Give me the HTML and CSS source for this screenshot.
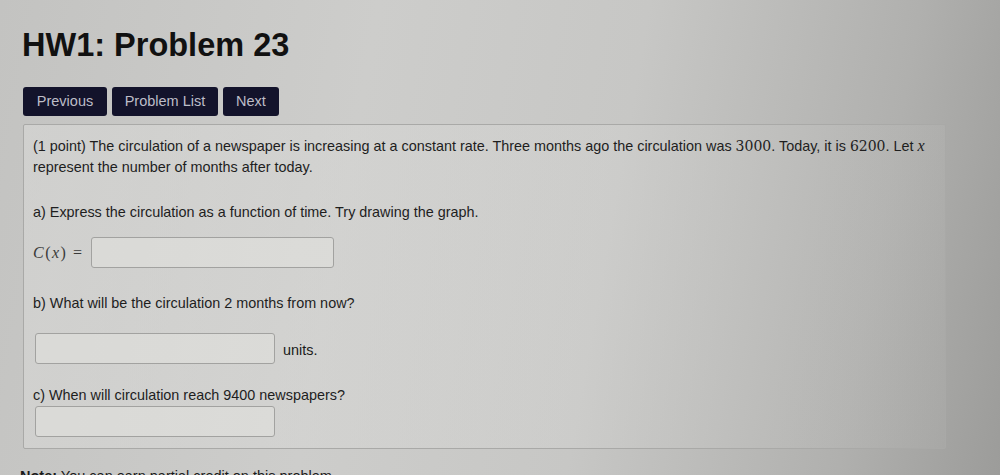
FILE: index.html
```html
<!DOCTYPE html>
<html>
<head>
<meta charset="utf-8">
<link rel="stylesheet" href="styles.css">
</head>
<body>
<div class="page">
  <h1 class="title">HW1: Problem 23</h1>
  <nav class="nav">
    <span class="btn btn-prev">Previous</span>
    <span class="btn btn-list">Problem List</span>
    <span class="btn btn-next">Next</span>
  </nav>
  <div class="problem">
    <p class="intro">(1 point) The circulation of a newspaper is increasing at a constant rate. Three months ago the circulation was <span class="num">3000</span>. Today, it is <span class="num">6200</span>. Let <span class="mvar">x</span><br>represent the number of months after today.</p>
    <p class="q qa">a) Express the circulation as a function of time. Try drawing the graph.</p>
    <div class="row row-c">
      <span class="math"><span class="mit">C</span>(<span class="mvar">x</span>)&nbsp;=</span>
      <span class="field field-wide"></span>
    </div>
    <p class="q qb">b) What will be the circulation 2 months from now?</p>
    <div class="row row-b">
      <span class="field"></span>
      <span class="unit">units.</span>
    </div>
    <p class="q qc">c) When will circulation reach 9400 newspapers?</p>
    <div class="row row-last">
      <span class="field"></span>
    </div>
  </div>
  <p class="note"><b>Note:</b> You can earn partial credit on this problem.</p>
</div>
</body>
</html>
```

FILE: styles.css
```css
html, body {
  margin: 0;
  padding: 0;
  height: 100%;
  overflow: hidden;
}
body {
  background: linear-gradient(100deg, #c3c3c1 0%, #cdcdcb 35%, #c7c7c5 60%, #b0b0ae 85%, #9c9c9a 100%);
  font-family: "Liberation Sans", Arial, sans-serif;
  color: #1a1a1a;
}
.page {
  padding: 26px 0 0 23px;
  width: 923px;
}
.title {
  margin: 0 0 0 -1px;
  font-size: 32.5px;
  font-weight: bold;
  line-height: 38px;
  color: #111;
}
.nav {
  display: flex;
  gap: 5px;
  margin-top: 23px;
}
.btn {
  display: inline-flex;
  align-items: center;
  justify-content: center;
  height: 29px;
  background: #13132b;
  color: #bdbdc8;
  font-size: 14.5px;
  border-radius: 3px;
  box-sizing: border-box;
  padding-bottom: 1px;
}
.btn-prev { width: 84px; }
.btn-list { width: 106px; }
.btn-next { width: 56px; }
.problem {
  margin-top: 8px;
  border: 1px solid #a9a9a7;
  background: linear-gradient(100deg, rgba(220,220,218,0.5) 0%, rgba(215,215,213,0.35) 60%, rgba(180,180,178,0.25) 100%);
  padding: 10px 10px 10px 9px;
  height: 325px;
  box-sizing: border-box;
  border-radius: 2px;
}
.problem p { margin: 0; }
.intro {
  font-size: 14.4px;
  line-height: 21px;
  color: #1e1e1e;
}
.num {
  font-family: "DejaVu Serif", "Liberation Serif", serif;
  font-size: 14px;
}
.mvar, .mit {
  font-family: "Liberation Serif", serif;
  font-style: italic;
  font-size: 16px;
}
.q {
  font-size: 14.4px;
  line-height: 20px;
  color: #1e1e1e;
}
.qa { margin-top: 24px !important; }
.qb { margin-top: 25px !important; }
.qc { margin-top: 21px !important; }
.row {
  display: flex;
  align-items: center;
  gap: 6px;
}
.row-c { margin-top: 15px; }
.row-b { margin-top: 20px; }
.row-last { margin-top: 1px; }
.math {
  font-family: "Liberation Serif", serif;
  font-size: 16px;
  color: #3a3a3a;
  width: 52px;
  letter-spacing: 1.5px;
}
.field {
  display: block;
  width: 240px;
  height: 31px;
  border: 1px solid #a2a2a0;
  border-radius: 3px;
  background: rgba(225,225,223,0.55);
  box-sizing: border-box;
  margin-left: 2px;
}
.field-wide { width: 243px; margin-left: 0; }
.unit {
  font-size: 14.4px;
  padding-top: 2px;
  margin-left: 2px;
}
.note {
  margin: 19px 0 0 -3px;
  font-size: 14.5px;
  color: #1a1a1a;
}
```
